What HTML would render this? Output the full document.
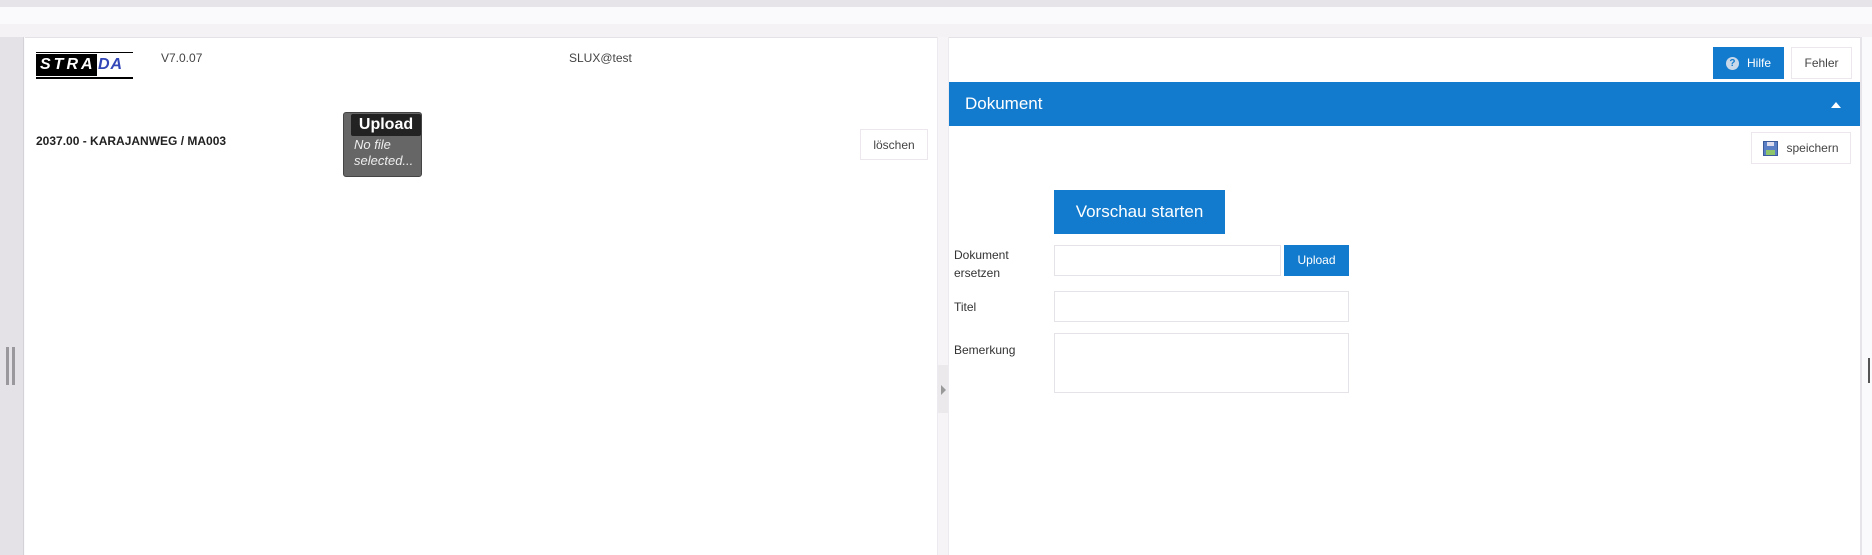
<!DOCTYPE html>
<html><head><meta charset="utf-8"><style>
*{margin:0;padding:0;box-sizing:border-box}
body{width:1872px;height:555px;overflow:hidden;background:#faf9fb;font-family:"Liberation Sans",sans-serif;position:relative;color:#333}
.a{position:absolute}
.btn{position:absolute;border:1px solid #ebe7ec;background:#fff;font-size:12px;color:#444;display:flex;align-items:center;justify-content:center}
.inp{position:absolute;border:1px solid #e6e3e8;background:#fff}
.lbl{position:absolute;font-size:12px;color:#333;line-height:18px}
</style></head><body>
<div class="a" style="left:0;top:0;width:1872px;height:7px;background:#e6e4e8"></div>
<div class="a" style="left:0;top:24px;width:1872px;height:13px;background:#f4f2f5"></div>
<div class="a" style="left:0;top:37px;width:24px;height:518px;background:#e4e2e6;border-right:1px solid #d4d2d6"></div>
<div class="a" style="left:6px;top:347px;width:3px;height:38px;background:#9a989c"></div>
<div class="a" style="left:12px;top:347px;width:3px;height:38px;background:#9a989c"></div>
<div class="a" style="left:25px;top:37px;width:1836px;height:518px;background:#fff;border-top:1px solid #e4e2e6"></div>
<div class="a" style="left:1860px;top:37px;width:2px;height:518px;background:#e6e4e8"></div>
<!-- logo -->
<div class="a" style="left:36px;top:52px;width:97px;height:1px;background:#000"></div>
<div class="a" style="left:36px;top:54px;width:61px;height:22px;background:#000;color:#fff;font:italic bold 16px 'Liberation Sans';letter-spacing:3px;padding-left:4px;line-height:22px;overflow:hidden;white-space:nowrap">STRA</div>
<div class="a" style="left:98px;top:54px;width:34px;height:22px;color:#3447b8;font:italic bold 16px 'Liberation Sans';letter-spacing:1px;line-height:22px">DA</div>
<div class="a" style="left:36px;top:77px;width:97px;height:2px;background:#000"></div>
<div class="a" style="left:161px;top:51px;font-size:12px;color:#444">V7.0.07</div>
<div class="a" style="left:569px;top:51px;font-size:12px;color:#444">SLUX@test</div>
<div class="a" style="left:36px;top:134px;font-size:12px;font-weight:bold;color:#222">2037.00 - KARAJANWEG / MA003</div>
<div class="a" style="left:343px;top:112px;width:79px;height:65px;background:#666;border:1px solid #444;border-radius:3px"></div>
<div class="a" style="left:351px;top:114px;width:70px;height:22px;background:#222;color:#fff;font:bold 16px 'Liberation Sans';text-align:center;line-height:22px;border-radius:2px">Upload</div>
<div class="a" style="left:354px;top:137px;color:#eee;font:italic 13px/16px 'Liberation Sans'">No file<br>selected...</div>
<div class="btn" style="left:860px;top:129px;width:68px;height:31px">löschen</div>
<!-- divider -->
<div class="a" style="left:937px;top:37px;width:12px;height:518px;background:#f6f4f7;border-left:1px solid #eceaee;border-right:1px solid #eceaee"></div>
<div class="a" style="left:938px;top:365px;width:10px;height:48px;background:#ebe9ec"></div>
<div class="a" style="left:941px;top:385px;width:0;height:0;border-left:5px solid #999;border-top:5px solid transparent;border-bottom:5px solid transparent"></div>
<!-- right -->
<div class="btn" style="left:1713px;top:47px;width:71px;height:32px;background:#137bce;border-color:#137bce;color:#fff"><span style="display:inline-block;width:13px;height:13px;border-radius:50%;background:#c9d9ea;color:#137bce;font-size:10px;font-weight:bold;line-height:13px;text-align:center;margin-right:8px">?</span>Hilfe</div>
<div class="btn" style="left:1791px;top:47px;width:61px;height:32px">Fehler</div>
<div class="a" style="left:949px;top:82px;width:911px;height:44px;background:#137bce;color:#fff;font-size:17px;line-height:44px;padding-left:16px">Dokument</div>
<div class="a" style="left:1831px;top:102px;width:0;height:0;border-bottom:6px solid #fff;border-left:5px solid transparent;border-right:5px solid transparent"></div>
<div class="btn" style="left:1751px;top:132px;width:100px;height:32px"><span style="display:inline-block;width:15px;height:15px;background:#5b7fc4;border:1px solid #3a5a9a;margin-right:8px;position:relative"><span style="position:absolute;left:2px;top:8px;width:9px;height:5px;background:#8ec46a"></span><span style="position:absolute;left:3px;top:0;width:7px;height:4px;background:#dde"></span></span>speichern</div>
<div class="a" style="left:1054px;top:190px;width:171px;height:44px;background:#137bce;color:#fff;font-size:17px;line-height:44px;text-align:center">Vorschau starten</div>
<div class="lbl" style="left:954px;top:246px">Dokument<br>ersetzen</div>
<div class="inp" style="left:1054px;top:245px;width:227px;height:31px"></div>
<div class="a" style="left:1284px;top:245px;width:65px;height:31px;background:#137bce;color:#fff;font-size:12px;line-height:31px;text-align:center">Upload</div>
<div class="lbl" style="left:954px;top:298px">Titel</div>
<div class="inp" style="left:1054px;top:291px;width:295px;height:31px"></div>
<div class="lbl" style="left:954px;top:341px">Bemerkung</div>
<div class="inp" style="left:1054px;top:333px;width:295px;height:60px"></div>
<div class="a" style="left:1868px;top:358px;width:2px;height:25px;background:#555"></div>
</body></html>
